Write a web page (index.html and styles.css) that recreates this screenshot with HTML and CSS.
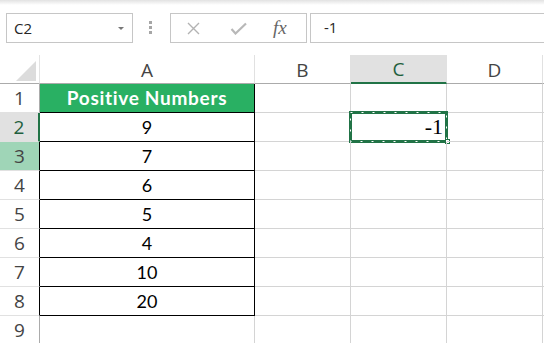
FILE: index.html
```
<!DOCTYPE html>
<html lang="en">
<head>
    <meta charset="UTF-8">
    <title>Positive Numbers</title>
    <link rel="stylesheet" href="styles.css">
</head>
<body>
    <div class="formula-row">
        <div class="name-box">
            <span>C2</span>
            <span class="caret"></span>
        </div>
        <div class="grip"><i></i><i></i><i></i></div>
        <div class="fx-buttons">
            <svg class="icon-cancel" width="13" height="13" viewBox="0 0 13 13">
                <path d="M1 1 L12 12 M12 1 L1 12" stroke="#b3b3b3" stroke-width="1.4" fill="none"/>
            </svg>
            <svg class="icon-enter" width="17" height="13" viewBox="0 0 17 13">
                <path d="M1.5 7 L5.5 11.5 L16 1.5" stroke="#b8b8b8" stroke-width="2.2" fill="none"/>
            </svg>
            <span class="fx">fx</span>
        </div>
        <div class="formula-input">-1</div>
    </div>

    <div class="sheet">
        <!-- column headers -->
        <div class="cell corner"><span class="corner-tri"></span></div>
        <div class="cell hd">A</div>
        <div class="cell hd">B</div>
        <div class="cell hd sel-col">C</div>
        <div class="cell hd">D</div>
        <div class="cell hd"></div>

        <div class="cell rh">1</div>
        <div class="cell title">Positive Numbers</div>
        <div class="cell"></div>
        <div class="cell"></div>
        <div class="cell"></div>
        <div class="cell"></div>

        <div class="cell rh sel-row">2</div>
        <div class="cell num">9</div>
        <div class="cell"></div>
        <div class="cell active">
            -1
            <svg class="ants" width="99" height="32" viewBox="0 0 99 32">
                <rect x="1.5" y="1.5" width="96" height="29" fill="none" stroke="#217346" stroke-width="3"/>
                <rect x="1.5" y="1.5" width="96" height="29" fill="none" stroke="#fff" stroke-width="1" stroke-dasharray="2 9"/>
                <rect x="96.5" y="28.5" width="4" height="4" fill="#fff" stroke="#217346" stroke-width="1"/>
            </svg>
        </div>
        <div class="cell"></div>
        <div class="cell"></div>

        <div class="cell rh hover-row edge">3</div>
        <div class="cell num">7</div>
        <div class="cell"></div>
        <div class="cell"></div>
        <div class="cell"></div>
        <div class="cell"></div>

        <div class="cell rh edge">4</div>
        <div class="cell num">6</div>
        <div class="cell"></div>
        <div class="cell"></div>
        <div class="cell"></div>
        <div class="cell"></div>

        <div class="cell rh edge">5</div>
        <div class="cell num">5</div>
        <div class="cell"></div>
        <div class="cell"></div>
        <div class="cell"></div>
        <div class="cell"></div>

        <div class="cell rh edge">6</div>
        <div class="cell num">4</div>
        <div class="cell"></div>
        <div class="cell"></div>
        <div class="cell"></div>
        <div class="cell"></div>

        <div class="cell rh edge">7</div>
        <div class="cell num">10</div>
        <div class="cell"></div>
        <div class="cell"></div>
        <div class="cell"></div>
        <div class="cell"></div>

        <div class="cell rh edge">8</div>
        <div class="cell num">20</div>
        <div class="cell"></div>
        <div class="cell"></div>
        <div class="cell"></div>
        <div class="cell"></div>

        <div class="cell rh">9</div>
        <div class="cell"></div>
        <div class="cell"></div>
        <div class="cell"></div>
        <div class="cell"></div>
        <div class="cell"></div>
    </div>
</body>
</html>
```

FILE: styles.css
```
html, body {
    margin: 0;
    height: 343px;
    overflow: hidden;
    background-color: #fff;
}
body {
    font-family: "Open Sans", "Liberation Sans", sans-serif;
    color: #222;
}

/* formula bar */
.formula-row {
    display: flex;
    align-items: flex-start;
    height: 55px;
    padding-top: 13px;
    box-sizing: border-box;
    background: linear-gradient(#e2e2e2, #fff 5px);
}
.name-box {
    display: flex;
    align-items: center;
    margin-left: 6px;
    width: 127px;
    height: 30px;
    padding-left: 7px;
    box-sizing: border-box;
    border: 1px solid #c6c6c6;
    font-size: 15px;
    color: #262626;
}
.caret {
    margin-left: auto;
    margin-right: 8px;
    width: 0;
    height: 0;
    border-left: 3px solid transparent;
    border-right: 3px solid transparent;
    border-top: 3px solid #777;
}
.grip {
    display: flex;
    flex-direction: column;
    gap: 2px;
    margin-left: 16px;
    margin-top: 8px;
}
.grip > i {
    display: block;
    width: 3px;
    height: 3px;
    background-color: #a6a6a6;
}
.fx-buttons {
    display: flex;
    align-items: center;
    margin-left: 18px;
    width: 137px;
    height: 30px;
    box-sizing: border-box;
    border: 1px solid #c6c6c6;
}
.icon-cancel {
    margin-left: 16px;
}
.icon-enter {
    margin-left: 30px;
}
.fx {
    margin-left: 26px;
    font-family: "Liberation Serif", serif;
    font-style: italic;
    font-size: 19px;
    color: #666;
}
.formula-input {
    flex: 1 0 auto;
    margin-left: 3px;
    margin-right: -6px;
    height: 30px;
    padding-left: 13px;
    box-sizing: border-box;
    border: 1px solid #c6c6c6;
    font-size: 15px;
    line-height: 27px;
    color: #262626;
}

/* grid */
.sheet {
    display: grid;
    grid-template-columns: 40px 215px 96px 96px 96px 40px;
    grid-auto-rows: 29px;
    width: 544px;
    overflow: hidden;
}
.cell {
    position: relative;
    box-sizing: border-box;
    border-right: 1px solid #d4d4d4;
    border-bottom: 1px solid #d4d4d4;
    font-family: Lato, "Liberation Sans", sans-serif;
    font-size: 18px;
    line-height: 28px;
    text-align: center;
    color: #000;
}
.corner {
    border-right-color: #e3e3e3;
    border-bottom-color: #ababab;
}
.corner-tri {
    position: absolute;
    right: 3px;
    bottom: 2px;
    width: 0;
    height: 0;
    border-left: 20px solid transparent;
    border-bottom: 20px solid #dcdcdc;
}
.hd {
    padding-top: 2px;
    font-family: "Open Sans", sans-serif;
    font-size: 19px;
    line-height: 26px;
    color: #444;
    border-right-color: #e1e1e1;
    border-bottom-color: #ababab;
}
.hd.sel-col {
    background-color: #e1e1e1;
    border-bottom: 2px solid #217346;
    line-height: 25px;
    color: #1f5f3d;
}
.rh {
    font-family: "Open Sans", sans-serif;
    font-size: 19px;
    color: #444;
    border-right-color: #ababab;
    border-bottom-color: #e1e1e1;
}
.rh.sel-row {
    background-color: #e1e1e1;
    border-right: 2px solid #217346;
    color: #1f5f3d;
}
.rh.hover-row {
    background-color: #9fd5b7;
}
.rh.edge {
    border-right-color: #000;
}
.title {
    background-color: #29b063;
    color: #fff;
    font-weight: bold;
    font-size: 19px;
    letter-spacing: 0.7px;
    border-right-color: #000;
    border-bottom-color: #000;
}
.num {
    border-right-color: #000;
    border-bottom-color: #000;
}
.active {
    padding-right: 3px;
    text-align: right;
    font-family: "Liberation Serif", serif;
    font-size: 22px;
}
.ants {
    position: absolute;
    left: -2px;
    top: -2px;
    overflow: visible;
}
```
